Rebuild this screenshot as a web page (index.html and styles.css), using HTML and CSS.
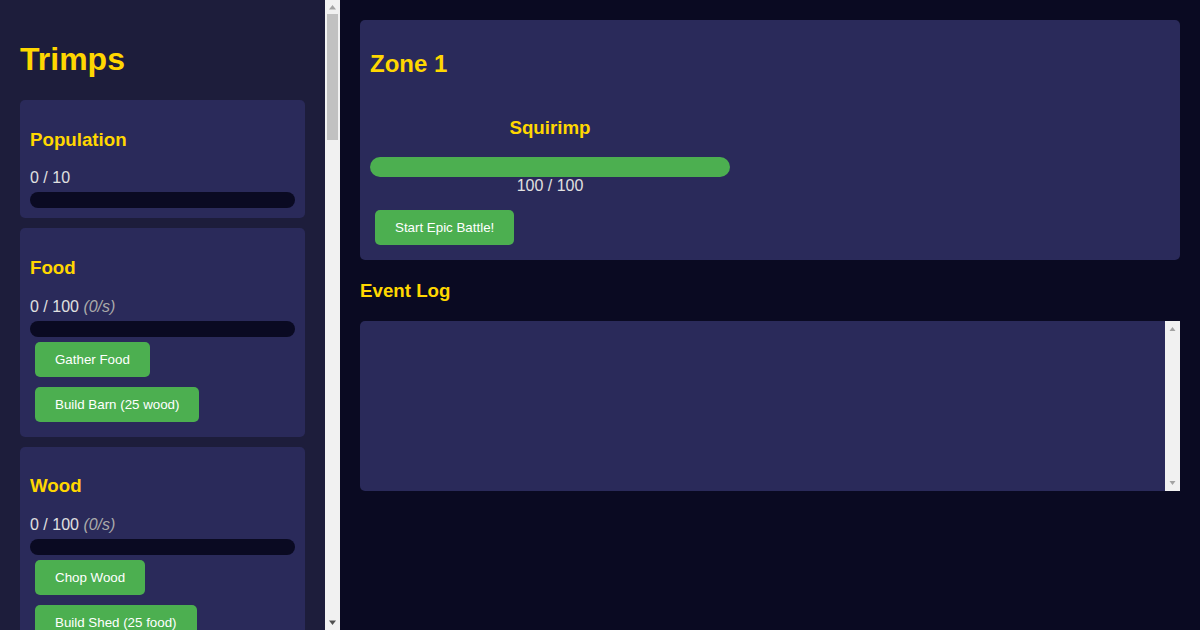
FILE: index.html
```html
<!DOCTYPE html>
<html lang="en">
<head>
<meta charset="utf-8">
<title>Trimps</title>
<link rel="stylesheet" href="styles.css">
</head>
<body>
<div class="app">
  <aside class="sidebar">
    <div class="sidebar-scroll">
      <h1 class="title">Trimps</h1>

      <div class="card">
        <h3>Population</h3>
        <div class="amount">0 / 10</div>
        <div class="bar"><div class="fill" style="width:0%"></div></div>
      </div>

      <div class="card">
        <h3>Food</h3>
        <div class="amount">0 / 100 <span class="rate">(0/s)</span></div>
        <div class="bar"><div class="fill" style="width:0%"></div></div>
        <div class="actions">
          <button class="btn">Gather Food</button>
          <button class="btn">Build Barn (25 wood)</button>
        </div>
      </div>

      <div class="card">
        <h3>Wood</h3>
        <div class="amount">0 / 100 <span class="rate">(0/s)</span></div>
        <div class="bar"><div class="fill" style="width:0%"></div></div>
        <div class="actions">
          <button class="btn">Chop Wood</button>
          <button class="btn">Build Shed (25 food)</button>
        </div>
      </div>
    </div>

    <div class="scrollbar">
      <div class="sb-btn">
        <svg width="15" height="14" viewBox="0 0 15 14"><polygon class="arrow-off" points="4,9.5 7.5,5 11,9.5"/></svg>
      </div>
      <div class="sb-track">
        <div class="sb-thumb"></div>
      </div>
      <div class="sb-btn">
        <svg width="15" height="14" viewBox="0 0 15 14"><polygon class="arrow-on" points="4,4.5 11,4.5 7.5,9"/></svg>
      </div>
    </div>
  </aside>

  <main class="main">
    <section class="zone-card">
      <h2 class="zone-title">Zone 1</h2>
      <div class="enemy">
        <h3>Squirimp</h3>
        <div class="hp-bar"><div class="hp-fill" style="width:100%"></div></div>
        <div class="hp-text">100 / 100</div>
      </div>
      <div class="battle-actions">
        <button class="btn">Start Epic Battle!</button>
      </div>
    </section>

    <h3 class="log-title">Event Log</h3>
    <div class="log">
      <div class="log-content"></div>
      <div class="scrollbar">
        <div class="sb-btn">
          <svg width="15" height="14" viewBox="0 0 15 14"><polygon class="arrow-off" points="4.5,10 7.5,6 10.5,10"/></svg>
        </div>
        <div class="sb-track"></div>
        <div class="sb-btn">
          <svg width="15" height="14" viewBox="0 0 15 14"><polygon class="arrow-off" points="4.5,4 10.5,4 7.5,8"/></svg>
        </div>
      </div>
    </div>
  </main>
</div>
</body>
</html>
```

FILE: styles.css
```css
html, body {
  margin: 0;
  padding: 0;
  height: 100%;
}

body {
  background: #0a0a22;
  color: #e0e0e0;
  font-family: "Liberation Sans", Arial, sans-serif;
  overflow: hidden;
}

.app {
  display: flex;
  height: 100vh;
}

/* sidebar */
.sidebar {
  width: 340px;
  flex: 0 0 340px;
  height: 100vh;
  display: flex;
  background: #1d1d3b;
}

.sidebar-scroll {
  flex: 1;
  min-width: 0;
  box-sizing: border-box;
  padding: 20px;
  overflow: hidden;
}

/* drawn classic scrollbar */
.scrollbar {
  flex: 0 0 15px;
  width: 15px;
  display: flex;
  flex-direction: column;
  background: #f1f1f1;
}

.sb-btn {
  flex: 0 0 14px;
  height: 14px;
  display: flex;
}

.sb-btn svg {
  display: block;
}

.arrow-off {
  fill: #a3a3a3;
}

.arrow-on {
  fill: #505050;
}

.sb-track {
  flex: 1;
  padding: 0 2px;
}

.sb-thumb {
  height: 126px;
  background: #c1c1c1;
}

.title {
  color: #ffd700;
  font-size: 32px;
  margin: 21.44px 0;
}

h3 {
  color: #ffd700;
  font-size: 18.72px;
  margin: 18.72px 0;
}

.card {
  background: #2a2a5a;
  border-radius: 5px;
  padding: 10px;
  margin-bottom: 10px;
}

.amount {
  font-size: 16px;
  line-height: 18px;
}

.rate {
  color: #aaaaaa;
  font-style: italic;
}

.bar {
  height: 16px;
  margin-top: 5px;
  border-radius: 8px;
  background: #0a0a22;
  overflow: hidden;
}

.fill {
  height: 100%;
  background: #4caf50;
}

.actions {
  display: flex;
  flex-direction: column;
  align-items: flex-start;
}

.btn {
  margin: 5px;
  padding: 10px 20px;
  border: none;
  border-radius: 5px;
  background: #4caf50;
  color: #ffffff;
  font-family: "Liberation Sans", Arial, sans-serif;
  font-size: 13.33px;
  line-height: 15px;
  cursor: pointer;
}

/* main */
.main {
  flex: 1;
  min-width: 0;
  padding: 20px;
  overflow: hidden;
}

.zone-card {
  background: #2a2a5a;
  border-radius: 5px;
  padding: 10px;
  margin-bottom: 20px;
}

.zone-title {
  color: #ffd700;
  font-size: 24px;
  margin: 19.92px 0;
}

.enemy {
  display: flow-root;
  width: 360px;
  text-align: center;
}

.hp-bar {
  height: 20px;
  border-radius: 10px;
  background: #0a0a22;
  overflow: hidden;
}

.hp-fill {
  height: 100%;
  background: #4caf50;
}

.hp-text {
  font-size: 16px;
  line-height: 18.4px;
}

.battle-actions {
  margin-top: 9px;
  display: flex;
}

.log-title {
  margin: 18.72px 0 19.6px;
}

.log {
  height: 170px;
  display: flex;
  background: #2a2a5a;
  border-radius: 5px;
}

.log-content {
  flex: 1;
  min-width: 0;
  padding: 10px;
}
```
